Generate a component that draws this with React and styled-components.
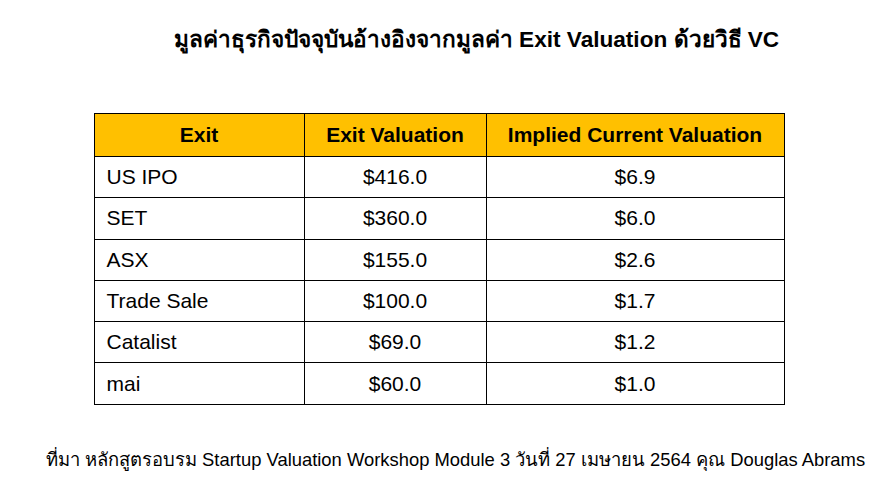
import React from "react";
import styled, { createGlobalStyle } from "styled-components";

const Global = createGlobalStyle`
  html, body { margin: 0; padding: 0; background: #fff; }
  body { font-family: "Liberation Sans", Arial, sans-serif; color: #000; }
`;

const Page = styled.div`
  width: 887px;
  height: 488px;
  box-sizing: border-box;
  display: flex;
  flex-direction: column;
  align-items: center;
  padding-top: 25px;
`;

const Title = styled.h1`
  margin: 0 0 0 66px;
  font-size: 22.6px;
  line-height: 29px;
  font-weight: bold;
  white-space: nowrap;
`;

const Table = styled.table`
  margin-top: 59px;
  margin-left: -9px;
  border-collapse: collapse;
  font-size: 21px;
`;

const HeadCell = styled.th`
  background: #ffc000;
  border: 1.5px solid #000;
  height: 42px;
  padding: 0;
  font-weight: bold;
  text-align: center;
  width: ${(p) => p.$w}px;
`;

const Cell = styled.td`
  border: 1.5px solid #000;
  height: 40.3px;
  padding: 0 ${(p) => (p.$left ? "12px" : "0")};
  text-align: ${(p) => (p.$left ? "left" : "center")};
`;

const Source = styled.p`
  margin: 40px 0 0 24px;
  font-size: 18.4px;
  white-space: nowrap;
`;

const rows = [
  ["US IPO", "$416.0", "$6.9"],
  ["SET", "$360.0", "$6.0"],
  ["ASX", "$155.0", "$2.6"],
  ["Trade Sale", "$100.0", "$1.7"],
  ["Catalist", "$69.0", "$1.2"],
  ["mai", "$60.0", "$1.0"],
];

export default function App() {
  return (
    <>
      <Global />
      <Page>
        <Title>มูลค่าธุรกิจปัจจุบันอ้างอิงจากมูลค่า Exit Valuation ด้วยวิธี VC</Title>
        <Table>
          <thead>
            <tr>
              <HeadCell $w={209}>Exit</HeadCell>
              <HeadCell $w={181}>Exit Valuation</HeadCell>
              <HeadCell $w={297}>Implied Current Valuation</HeadCell>
            </tr>
          </thead>
          <tbody>
            {rows.map((r) => (
              <tr key={r[0]}>
                <Cell $left>{r[0]}</Cell>
                <Cell>{r[1]}</Cell>
                <Cell>{r[2]}</Cell>
              </tr>
            ))}
          </tbody>
        </Table>
        <Source>
          ที่มา หลักสูตรอบรม Startup Valuation Workshop Module 3 วันที่ 27 เมษายน 2564 คุณ Douglas Abrams
        </Source>
      </Page>
    </>
  );
}
